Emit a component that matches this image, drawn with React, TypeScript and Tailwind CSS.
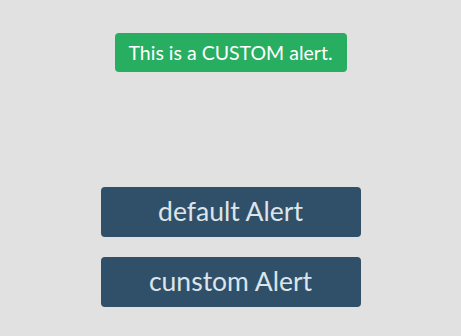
export default function App() {
  return (
    <div className="min-h-[336px] w-full bg-[#e1e1e1] flex flex-col items-center pt-[33px] font-['Lato','Open_Sans',sans-serif]">
      <div className="w-[232px] h-[39px] rounded-[4px] bg-[#27ae60] text-white text-[19.5px] flex items-center justify-center">
        This is a CUSTOM alert.
      </div>
      <div className="mt-[115px] flex flex-col gap-[20px]">
        <button className="w-[260px] h-[50px] rounded-[4px] bg-[#2f5068] text-[#dde4ea] text-[26.5px] flex items-center justify-center">
          default Alert
        </button>
        <button className="w-[260px] h-[50px] rounded-[4px] bg-[#2f5068] text-[#dde4ea] text-[26.5px] flex items-center justify-center">
          cunstom Alert
        </button>
      </div>
    </div>
  );
}
